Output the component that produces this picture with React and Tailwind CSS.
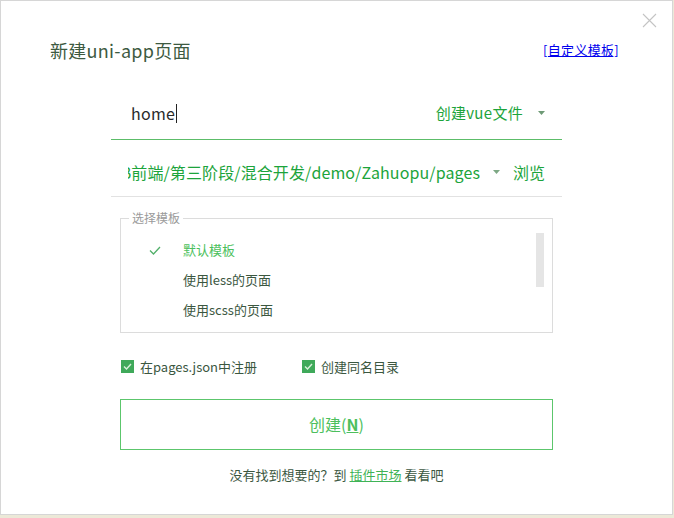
import React from "react"

const font = { fontFamily: '"Noto Sans CJK SC", "Noto Sans", sans-serif' }

// small dropdown caret
function Caret({ className }) {
    return (
        <svg width="7" height="4" viewBox="0 0 7 4" className={className}>
            <path d="M0 0H7L3.5 4Z" fill="currentColor" />
        </svg>
    )
}

function CheckBox({ label }) {
    return (
        <label className="flex items-center gap-[6px]">
            <span className="flex h-[13px] w-[13px] items-center justify-center bg-[#3fa95a]">
                <svg width="9" height="7" viewBox="0 0 9 7">
                    <path d="M1 3.5L3.5 6L8 1" fill="none" stroke="#d8f0dc" strokeWidth="1.4" />
                </svg>
            </span>
            <span className="text-[13px] text-[#3b573f]">{label}</span>
        </label>
    )
}

const templates = [
    { name: "默认模板", active: true },
    { name: "使用less的页面" },
    { name: "使用scss的页面" },
]

export default function App() {
    return (
        <div className="h-[518px] w-[674px] overflow-hidden bg-[#ece9d8]" style={font}>
            <div className="relative flex h-[515px] w-[673px] flex-col border border-[#d6d6d6] bg-white">
                {/* close */}
                <button className="absolute right-[15px] top-[12px] text-[#c4c4c4]">
                    <svg width="15" height="15" viewBox="0 0 15 15">
                        <path d="M1 1L14 14M14 1L1 14" stroke="currentColor" strokeWidth="1.1" />
                    </svg>
                </button>

                {/* header */}
                <div className="mt-[38px] flex h-[22px] items-center justify-between pl-[49px] pr-[53px]">
                    <h1 className="text-[18px] leading-[22px] tracking-[0.3px] text-[#3d5a41]">新建uni-app页面</h1>
                    <a className="text-[13px] leading-[16px] tracking-[0.3px] text-[#0000ee] underline">[自定义模板]</a>
                </div>

                {/* name + path */}
                <div className="mx-[110px] mt-[34px] flex flex-col">
                    <div className="flex h-[45px] items-center justify-between border-b border-[#5cbd69] pb-[8px] pl-[20px] pr-[16px]">
                        <div className="flex items-center text-[16px] tracking-[0.3px] text-[#2b2b2b]">
                            home<span className="ml-[1px] h-[19px] w-[1px] bg-[#222]" />
                        </div>
                        <div className="flex items-center gap-[15px] text-[15px] tracking-[0.3px] text-[#1ca43b]">
                            <span>创建vue文件</span>
                            <Caret className="mr-[1px] text-[#6e9a76]" />
                        </div>
                    </div>
                    <div className="flex h-[57px] items-center border-b border-[#e2e2e2] pl-[17px] pr-[17px] pt-[8px]">
                        <div className="flex min-w-0 flex-1 justify-end overflow-hidden whitespace-nowrap text-[16px] tracking-[0.1px] text-[#1ca43b]">
                            <span>D:/WEB前端/第三阶段/混合开发/demo/Zahuopu/pages</span>
                        </div>
                        <Caret className="ml-[13px] text-[#7da884]" />
                        <span className="ml-[13px] text-[16px] text-[#1ca43b]">浏览</span>
                    </div>
                </div>

                {/* template list */}
                <fieldset className="mx-[119px] mt-[14px] flex h-[122px] border border-[#dcdcdc] pb-[12px]">
                    <legend className="ml-[8px] px-[3px] text-[12px] leading-[14px] text-[#9a9a9a]">选择模板</legend>
                    <div className="flex flex-1 items-start justify-between pt-[8px] pr-[8px]">
                        <ul className="flex flex-col pt-[2px]">
                            {templates.map((t) => (
                                <li key={t.name} className="flex h-[30px] items-center text-[13px]">
                                    <span className="flex w-[62px] justify-end pr-[22px]">
                                        {t.active && (
                                            <svg width="12" height="9" viewBox="0 0 12 9">
                                                <path d="M1 4.5L4.5 8L11 1" fill="none" stroke="#52b06a" strokeWidth="1.3" />
                                            </svg>
                                        )}
                                    </span>
                                    <span className={t.active ? "text-[#4cbf5d]" : "text-[#3b573f]"}>{t.name}</span>
                                </li>
                            ))}
                        </ul>
                        <div className="h-[54px] w-[8px] bg-[#e5e5e5]" />
                    </div>
                </fieldset>

                {/* options */}
                <div className="ml-[120px] mt-[24px] flex items-center gap-[45px]">
                    <CheckBox label="在pages.json中注册" />
                    <CheckBox label="创建同名目录" />
                </div>

                <button className="mx-[119px] mt-[22px] flex h-[51px] items-center justify-center border border-[#5cc66c] text-[16px] text-[#4cbf5d]">
                    创建(<span className="font-bold underline">N</span>)
                </button>

                <p className="mt-[15px] text-center text-[13px] text-[#3b573f]">
                    没有找到想要的？到 <a className="text-[#3fb356] underline">插件市场</a> 看看吧
                </p>
            </div>
        </div>
    )
}
